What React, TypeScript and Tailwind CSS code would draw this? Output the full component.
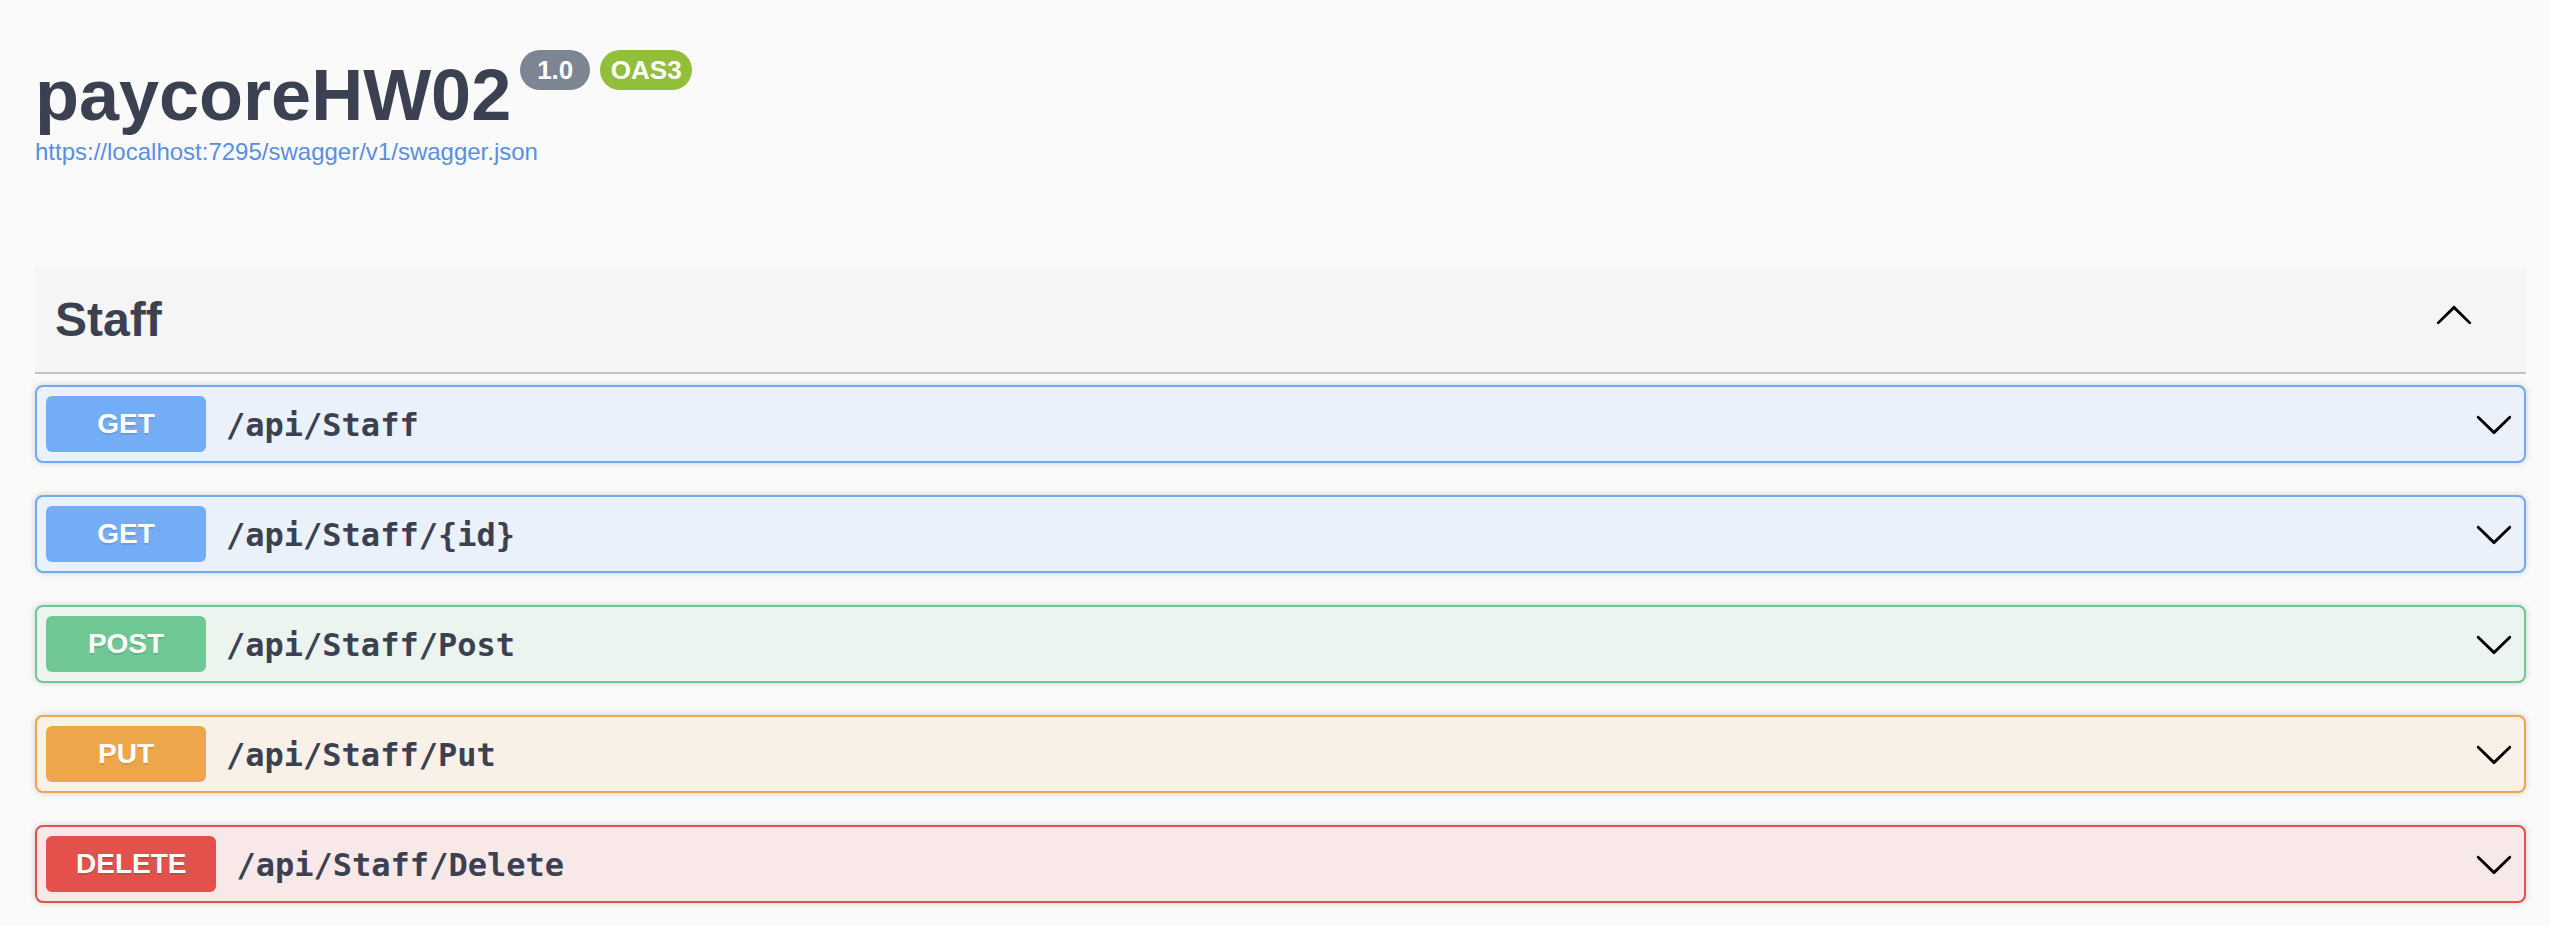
const ops = [
  { method: 'GET', path: '/api/Staff', badge: 'bg-[#72adf6]', box: 'bg-[#ebf1fa] border-[#6fabf5]' },
  { method: 'GET', path: '/api/Staff/{id}', badge: 'bg-[#72adf6]', box: 'bg-[#ebf1fa] border-[#6fabf5]' },
  { method: 'POST', path: '/api/Staff/Post', badge: 'bg-[#6fc894]', box: 'bg-[#ebf4ee] border-[#70c993]' },
  { method: 'PUT', path: '/api/Staff/Put', badge: 'bg-[#eea64b]', box: 'bg-[#f9f0e7] border-[#eea64b]' },
  { method: 'DELETE', path: '/api/Staff/Delete', badge: 'bg-[#e4504b]', box: 'bg-[#f8e8e8] border-[#e4504b]' },
]

function ArrowDown() {
  return (
    <svg width="40" height="40" viewBox="0 0 20 20" className="shrink-0 fill-black">
      <path d="M17.418 6.109c.272-.268.709-.268.979 0s.271.701 0 .969l-7.908 7.83c-.27.268-.707.268-.979 0l-7.908-7.83c-.27-.268-.27-.701 0-.969.271-.268.709-.268.979 0L10 13.25l7.418-7.141z" />
    </svg>
  )
}

function ArrowUp() {
  return (
    <svg width="40" height="40" viewBox="0 0 20 20" className="shrink-0 fill-black">
      <path d="M17.418 14.908c.272.268.709.268.979 0s.271-.701 0-.969l-7.908-7.83c-.27-.268-.707-.268-.979 0l-7.908 7.83c-.27.268-.27.701 0 .969.271.268.709.268.979 0L10 7.767l7.418 7.141z" />
    </svg>
  )
}

export default function App() {
  return (
    <div className="min-h-screen w-full bg-[#fafafa] pl-[35px] pr-[24px] pt-[50px] font-['Liberation_Sans',Arial,sans-serif] text-[#3b4151]">
      {/* Info */}
      <div className="flex items-start">
        <h1 className="mt-[5px] text-[72px] font-bold leading-[80px]">paycoreHW02</h1>
        <span className="ml-[9px] flex h-[40px] w-[70px] items-center justify-center rounded-full bg-[#7d8492] text-[26px] font-bold text-white">
          1.0
        </span>
        <span className="ml-[10px] flex h-[40px] w-[92px] items-center justify-center rounded-full bg-[#92bf3b] text-[26px] font-bold text-white">
          OAS3
        </span>
      </div>
      <a href="#" className="mt-[3px] block text-[24px] leading-[28px] text-[#5a8fdf]">
        https://localhost:7295/swagger/v1/swagger.json
      </a>

      {/* Tag section */}
      <div className="mt-[102px]">
        <div className="flex h-[106px] items-center border-b-2 border-[#c1c2c7] bg-[#f5f5f5] pl-[20px] pr-[52px]">
          <h3 className="flex-1 text-[48px] font-bold">Staff</h3>
          <div className="mb-[12px]">
            <ArrowUp />
          </div>
        </div>

        <div className="mt-[11px] flex flex-col gap-[32px]">
          {ops.map(op => (
            <div
              key={op.path}
              className={`flex items-center rounded-[8px] border-2 py-[9px] pl-[9px] pr-[10px] shadow-[0_0_6px_rgba(0,0,0,0.19)] ${op.box}`}
            >
              <span
                className={`flex h-[56px] min-w-[160px] items-center justify-center rounded-[6px] px-[30px] text-[28px] font-bold text-white [text-shadow:0_2px_0_rgba(0,0,0,0.1)] ${op.badge}`}
              >
                {op.method}
              </span>
              <span className="ml-[20px] flex-1 pt-[1px] font-['DejaVu_Sans_Mono',monospace] text-[32px] font-bold text-[#3b4151]">
                {op.path}
              </span>
              <ArrowDown />
            </div>
          ))}
        </div>
      </div>
    </div>
  )
}
